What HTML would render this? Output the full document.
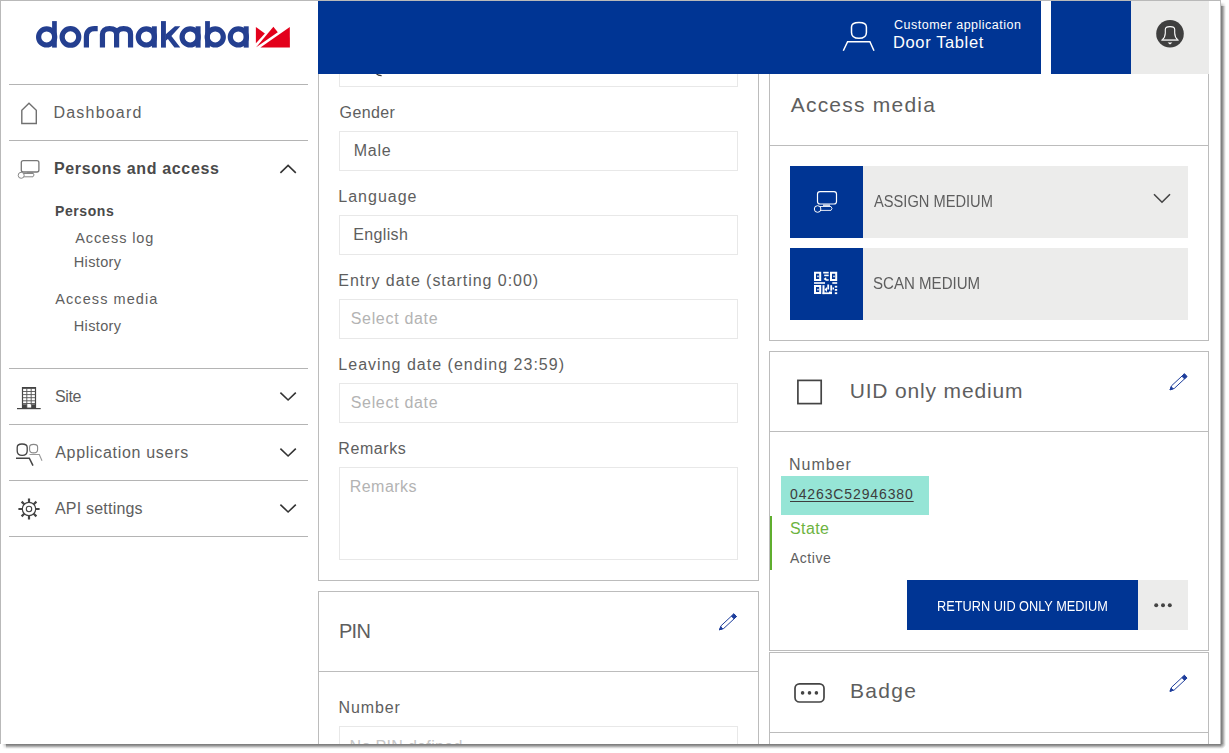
<!DOCTYPE html>
<html><head><meta charset="utf-8"><title>dormakaba</title>
<style>
html,body{margin:0;padding:0;background:#fff;}
body{width:1229px;height:753px;position:relative;overflow:hidden;font-family:"Liberation Sans", sans-serif;}
.a{position:absolute;box-sizing:border-box;}
.t{position:absolute;white-space:nowrap;font-family:"Liberation Sans", sans-serif;}
.ln{position:absolute;height:1px;background:#b4b4b4;}
.card{position:absolute;box-sizing:border-box;border:1px solid #bcbcbc;background:#fff;}
.inp{position:absolute;box-sizing:border-box;border:1px solid #e8e8e8;background:#fff;}
svg{position:absolute;overflow:visible;}
</style></head><body>
<!-- window shadow -->
<div class="a" style="left:1221px;top:6px;width:5px;height:738px;background:linear-gradient(90deg,rgba(0,0,0,.54),rgba(0,0,0,.4) 35%,rgba(0,0,0,.12) 75%,rgba(0,0,0,0));"></div>
<div class="a" style="left:6px;top:744px;width:1215px;height:5px;background:linear-gradient(180deg,rgba(0,0,0,.54),rgba(0,0,0,.4) 35%,rgba(0,0,0,.12) 75%,rgba(0,0,0,0));"></div>
<div class="a" style="left:1221px;top:744px;width:5px;height:5px;background:radial-gradient(circle at 0 0,rgba(0,0,0,.5),rgba(0,0,0,.3) 2px,rgba(0,0,0,0) 5px);"></div>
<div class="a" style="left:1221px;top:2px;width:5px;height:4px;background:linear-gradient(90deg,rgba(0,0,0,.3),rgba(0,0,0,.15) 40%,rgba(0,0,0,0));-webkit-mask-image:linear-gradient(180deg,transparent,#000);mask-image:linear-gradient(180deg,transparent,#000);"></div>
<div class="a" style="left:2px;top:744px;width:4px;height:5px;background:linear-gradient(180deg,rgba(0,0,0,.3),rgba(0,0,0,.15) 40%,rgba(0,0,0,0));-webkit-mask-image:linear-gradient(90deg,transparent,#000);mask-image:linear-gradient(90deg,transparent,#000);"></div>
<!-- window -->
<div class="a" id="win" style="left:0;top:0;width:1221px;height:744px;background:#fff;border-left:1px solid #b9b9b9;border-top:1px solid #b9b9b9;overflow:hidden;">
</div>
<div class="a" style="left:1px;top:1px;width:1220px;height:743px;overflow:hidden;">
 <div style="position:absolute;left:-1px;top:-1px;width:1229px;height:753px;">
  <!-- sidebar -->
  <svg style="left:0;top:0" width="1229" height="753" viewBox="0 0 1229 753">
   <!-- logo -->
   <g fill="none" stroke="#243f90" stroke-width="5.2">
    <circle cx="46.65" cy="36.95" r="8.05"/>
    <circle cx="70.45" cy="36.95" r="8.3"/>
    <path d="M86.4 47.6 V36.8 Q86.4 28.7 94.5 28.7 H97.7"/>
    <path d="M102.45 47.6 V34.5 Q102.45 28.7 109.5 28.7 Q116.6 28.7 116.6 34.5 V47.6 M116.6 34.5 Q116.6 28.7 123.6 28.7 Q130.55 28.7 130.55 34.5 V47.6"/>
    <circle cx="146.35" cy="36.95" r="8.05"/>
    <circle cx="190.15" cy="36.95" r="8.05"/>
    <circle cx="215.25" cy="36.95" r="8.05"/>
    <circle cx="238.35" cy="36.95" r="8.05"/>
    
   </g>
   <g fill="#243f90">
    <rect x="52.1" y="21.1" width="4.7" height="26.5"/>
    <rect x="151.9" y="26.3" width="4.9" height="21.3"/>
    <rect x="161" y="21.1" width="4.9" height="26.5"/>
    <polygon points="165.5,34.6 174.9,26.3 180.3,26.3 171.4,36 180.3,47.6 174.4,47.6 167.9,38.9 165.5,41"/>
    <rect x="195.6" y="26.3" width="5" height="21.3"/>
    <rect x="205.1" y="21.1" width="4.8" height="26.5"/>
    <rect x="243.7" y="26.3" width="5" height="21.3"/>
   </g>
   <polygon points="255.9,27 264.9,33.4 255.9,43.2" fill="#e3001b"/>
   <polygon points="273.4,26.8 277.8,32.3 256.2,47.3" fill="#e3001b"/>
   <polygon points="289.8,27 289.9,47.6 260.4,47.6" fill="#e3001b"/>
  </svg>
  <div class="ln" style="left:9px;top:84px;width:299px;"></div>
  <div class="ln" style="left:9px;top:140px;width:299px;"></div>
  <div class="ln" style="left:9px;top:368px;width:299px;"></div>
  <div class="ln" style="left:9px;top:424px;width:299px;"></div>
  <div class="ln" style="left:9px;top:480px;width:299px;"></div>
  <div class="ln" style="left:9px;top:536px;width:299px;"></div>
  <svg style="left:0;top:0" width="1229" height="753" viewBox="0 0 1229 753" fill="none">
   <!-- house -->
   <polygon points="21.8,123.5 21.8,110.3 29,103.3 36.3,110.3 36.3,123.5" stroke="#707070" stroke-width="1.4"/>
   <!-- monitor+key -->
   <rect x="21.3" y="160.6" width="17.6" height="11.4" rx="2" stroke="#777" stroke-width="1.3"/>
   <circle cx="21.2" cy="175.3" r="3" stroke="#888" stroke-width="1"/>
   <path d="M24 173.5 H33.5 L34 175 L33 176.8 H24" stroke="#888" stroke-width="1"/>
   <path d="M27 172.6 H33" stroke="#888" stroke-width="1.4"/>
   <!-- chevron up -->
   <polyline points="280.4,172.8 288.1,165.4 295.8,172.8" stroke="#333" stroke-width="1.6"/>
   <!-- chevrons down -->
   <polyline points="280.4,392.6 288.1,400 295.8,392.6" stroke="#333" stroke-width="1.6"/>
   <polyline points="280.4,448.6 288.1,456 295.8,448.6" stroke="#333" stroke-width="1.6"/>
   <polyline points="280.4,504.6 288.1,512 295.8,504.6" stroke="#333" stroke-width="1.6"/>
   <!-- building -->
   <rect x="22.5" y="387.6" width="13" height="20.6" stroke="#444" stroke-width="1.2"/>
   <rect x="22" y="387.2" width="14" height="1.6" fill="#444"/>
   <path d="M26.8 388 V408 M31.2 388 V405 M22.5 391.5 H35.5 M22.5 394.6 H35.5 M22.5 397.7 H35.5 M22.5 400.8 H35.5 M22.5 403.5 H35.5" stroke="#555" stroke-width="0.9"/>
   <rect x="22.5" y="404.3" width="4.3" height="4" fill="#444"/>
   <rect x="31.2" y="404.3" width="4.3" height="4" fill="#444"/>
   <path d="M17 408.6 H40.7" stroke="#444" stroke-width="1.2"/>
   <!-- users -->
   <path d="M17.2 447.5 Q17.2 444 22 444 Q27.2 444 27.2 447.5 V451 Q27.2 455.3 22.2 455.3 Q17.2 455.3 17.2 451 Z" stroke="#444" stroke-width="1.3"/>
   <path d="M16 458.2 H29.3 L33 465.6" stroke="#444" stroke-width="1.5"/>
   <path d="M29.6 447 Q29.6 444.4 33.6 444.4 Q37.6 444.4 37.6 447 V449.8 Q37.6 452.9 33.6 452.9 Q29.6 452.9 29.6 449.8 Z" stroke="#888" stroke-width="1.1"/>
   <path d="M29.5 454.5 H39.3 L42 460.8" stroke="#999" stroke-width="1.1"/>
   <!-- gear -->
   <circle cx="29" cy="509" r="6.7" stroke="#444" stroke-width="1.2"/>
   <circle cx="29" cy="509" r="2.7" stroke="#444" stroke-width="1.1"/>
   <g stroke="#444" stroke-width="2.2">
    <path d="M29 498.4 V502.6 M29 515.4 V519.6 M18.4 509 H22.6 M35.4 509 H39.6"/>
    <path d="M21.6 501.6 L24.5 504.5 M33.5 513.5 L36.4 516.4 M36.4 501.6 L33.5 504.5 M24.5 513.5 L21.6 516.4"/>
   </g>
  </svg>

  <!-- middle column -->
  <div class="card" style="left:318px;top:-5px;width:441px;height:586px;"></div>
  <div class="inp" style="left:339px;top:47px;width:399px;height:40px;"></div>
  <div class="inp" style="left:339px;top:131px;width:399px;height:40px;"></div>
  <div class="inp" style="left:339px;top:215px;width:399px;height:40px;"></div>
  <div class="inp" style="left:339px;top:299px;width:399px;height:40px;"></div>
  <div class="inp" style="left:339px;top:383px;width:399px;height:40px;"></div>
  <div class="inp" style="left:339px;top:467px;width:399px;height:93px;"></div>
  <div class="card" style="left:318px;top:591px;width:441px;height:200px;"></div>
  <div class="ln" style="left:319px;top:671px;width:439px;background:#bcbcbc;"></div>
  <div class="inp" style="left:339px;top:726px;width:399px;height:40px;"></div>

  <!-- right column -->
  <div class="card" style="left:769px;top:-5px;width:440px;height:346px;"></div>
  <div class="ln" style="left:770px;top:145px;width:438px;background:#bcbcbc;"></div>
  <div class="a" style="left:790px;top:166px;width:73px;height:72px;background:#003594;"></div>
  <div class="a" style="left:863px;top:166px;width:325px;height:72px;background:#ececeb;"></div>
  <div class="a" style="left:790px;top:248px;width:73px;height:72px;background:#003594;"></div>
  <div class="a" style="left:863px;top:248px;width:325px;height:72px;background:#ececeb;"></div>

  <div class="card" style="left:769px;top:351px;width:440px;height:300px;"></div>
  <div class="ln" style="left:770px;top:431px;width:438px;background:#bcbcbc;"></div>
  <div class="a" style="left:781px;top:476px;width:148px;height:39px;background:#96e5d6;"></div>
  <div class="a" style="left:770px;top:516px;width:2px;height:54px;background:#5fae2e;"></div>
  <div class="a" style="left:907px;top:580px;width:231px;height:50px;background:#003594;"></div>
  <div class="a" style="left:1138px;top:580px;width:50px;height:50px;background:#ececeb;"></div>

  <div class="card" style="left:769px;top:652px;width:440px;height:200px;"></div>
  <div class="ln" style="left:770px;top:732px;width:438px;background:#bcbcbc;"></div>

  <svg style="left:0;top:0" width="1229" height="753" viewBox="0 0 1229 753" fill="none"><path d="M376.3 73.6 Q378.2 75.7 381.6 75.6" stroke="#333" stroke-width="1.3"/></svg>
  <!-- header -->
  <div class="a" style="left:318px;top:0;width:723px;height:74px;background:#003594;"></div>
  <div class="a" style="left:1051px;top:0;width:80px;height:74px;background:#003594;"></div>
  <div class="a" style="left:1131px;top:0;width:78px;height:74px;background:#ebebea;"></div>

  <svg style="left:0;top:0" width="1229" height="753" viewBox="0 0 1229 753" fill="none">
   <!-- header user -->
   <path d="M851.5 27 Q851.5 22.6 859 22.6 Q866.4 22.6 866.4 27 V32.5 Q866.4 38.3 859 38.3 Q851.5 38.3 851.5 32.5 Z" stroke="#fff" stroke-width="1.5"/>
   <path d="M843.3 50.8 L847.6 41.7 H869.9 L874 50.8" stroke="#fff" stroke-width="1.5"/>
   <!-- bell -->
   <circle cx="1170" cy="33.8" r="13.8" fill="#3f3f3f"/>
   <path d="M1162.2 40 Q1165.3 37 1165.3 33 V29.5 Q1165.3 26.6 1170 26.6 Q1174.7 26.6 1174.7 29.5 V33 Q1174.7 37 1177.8 40 Z" stroke="#fff" stroke-width="1.1"/>
   <path d="M1161.8 40.2 H1178.2" stroke="#ccc" stroke-width="1.2"/>
   <path d="M1167.6 42.4 H1172.4 L1170 44.6 Z" fill="#fff"/>
   <!-- assign medium icon -->
   <rect x="817.5" y="191.6" width="19" height="12.4" rx="2.5" stroke="#fff" stroke-width="1.2"/>
   <circle cx="817.6" cy="209" r="3.3" stroke="#fff" stroke-width="1"/>
   <path d="M820 206.5 H831 L832 208.5 L831 210.4 H820" stroke="#fff" stroke-width="0.9"/>
   <path d="M823 205.2 H830" stroke="#fff" stroke-width="1.2"/>
   <!-- chevron down -->
   <polyline points="1154,194.3 1162,202.2 1170,194.3" stroke="#444" stroke-width="1.6"/>
   <!-- QR -->
   <g fill="#fff">
    <path d="M814 271.8 h7.2 v9.2 h-7.2z M816 273.8 v5.2 h3.2 v-5.2z" fill-rule="evenodd"/>
    <path d="M830 271.8 h7.2 v9.2 h-7.2z M832 273.8 v5.2 h3.2 v-5.2z" fill-rule="evenodd"/>
    <path d="M814 285 h7.2 v9.1 h-7.2z M816 287 v5.1 h3.2 v-5.1z" fill-rule="evenodd"/>
    <rect x="817.3" y="275.6" width="1.4" height="1.6"/>
    <rect x="833.3" y="275.6" width="1.4" height="1.6"/>
    <rect x="817.3" y="288.8" width="1.4" height="1.6"/>
    <rect x="823.2" y="271.8" width="5.5" height="1.7"/>
    <rect x="824.2" y="274.6" width="4.5" height="1.6"/>
    <path d="M826 277.3 L823.5 279 L826 280.8 H828.7 V279.3 H826.5 Z"/>
    <rect x="814" y="282.2" width="11" height="1.6"/>
    <rect x="832.3" y="282.2" width="4.9" height="1.6"/>
    <rect x="822.5" y="285.2" width="2" height="8.9"/>
    <rect x="822.5" y="292.4" width="6.5" height="1.7"/>
    <path d="M827 287 L824.5 289.6 L827 292 Z"/>
    <rect x="827.3" y="284.5" width="1.8" height="5"/>
    <rect x="830.3" y="285.2" width="1.8" height="5.5"/>
    <rect x="829" y="291.5" width="3" height="2.6"/>
    <rect x="834.8" y="285.8" width="2.4" height="1.8"/>
    <rect x="834.8" y="289" width="2.4" height="1.8"/>
    <rect x="834.8" y="292.3" width="2.4" height="1.8"/>
    <rect x="832.5" y="287.5" width="1.5" height="2"/>
   </g>
   <!-- checkbox -->
   <rect x="797.9" y="380.4" width="23.3" height="23.2" stroke="#444" stroke-width="1.7"/>
   <!-- badge icon -->
   <rect x="795" y="683.8" width="29" height="18.2" rx="4.5" stroke="#444" stroke-width="1.7"/>
   <circle cx="802.6" cy="692.9" r="1.8" fill="#444"/>
   <circle cx="809.5" cy="692.9" r="1.8" fill="#444"/>
   <circle cx="816.4" cy="692.9" r="1.8" fill="#444"/>
   <!-- dots -->
   <circle cx="1156.2" cy="605.2" r="2" fill="#444"/>
   <circle cx="1163" cy="605.2" r="2" fill="#444"/>
   <circle cx="1169.8" cy="605.2" r="2" fill="#444"/>
  </svg>
  <!-- pencils -->
  <svg style="left:0;top:0" width="1229" height="753" viewBox="0 0 1229 753" fill="none">
   <g id="pen">
    <path d="M719.5 629.8 L721.14 625.69 L733.91 613.81 L736.49 616.59 L723.72 628.47 Z" stroke="#1e3e9c" stroke-width="1" stroke-linejoin="round"/>
    <path d="M719.5 629.8 L720.75 626.74 L722.65 628.78 Z" fill="#1e3e9c" stroke="#1e3e9c" stroke-width="1"/>
    <path d="M731.39 616.15 L733.91 613.81 L736.49 616.59 L733.97 618.93 Z" fill="#1e3e9c" stroke="#1e3e9c" stroke-width="0.7"/>
   </g>
   <use href="#pen" x="450.5" y="-240"/>
   <use href="#pen" x="450.5" y="61.5"/>
  </svg>
  <div class="t" style="left:53.50px;top:105.01px;font-size:16px;line-height:16px;font-weight:400;color:#5e5e5e;letter-spacing:1.203px;">Dashboard</div>
<div class="t" style="left:54.00px;top:161.01px;font-size:16px;line-height:16px;font-weight:700;color:#4a4a4a;letter-spacing:0.649px;">Persons and access</div>
<div class="t" style="left:55.00px;top:204.00px;font-size:14px;line-height:14px;font-weight:700;color:#4a4a4a;letter-spacing:0.590px;">Persons</div>
<div class="t" style="left:75.30px;top:231.01px;font-size:14.5px;line-height:14.5px;font-weight:400;color:#5e5e5e;letter-spacing:0.883px;">Access log</div>
<div class="t" style="left:73.80px;top:255.00px;font-size:14.5px;line-height:14.5px;font-weight:400;color:#5e5e5e;letter-spacing:0.356px;">History</div>
<div class="t" style="left:55.30px;top:292.01px;font-size:14.5px;line-height:14.5px;font-weight:400;color:#5e5e5e;letter-spacing:1.073px;">Access media</div>
<div class="t" style="left:73.80px;top:319.01px;font-size:14.5px;line-height:14.5px;font-weight:400;color:#5e5e5e;letter-spacing:0.356px;">History</div>
<div class="t" style="left:55.00px;top:389.01px;font-size:16px;line-height:16px;font-weight:400;color:#5e5e5e;letter-spacing:-0.357px;">Site</div>
<div class="t" style="left:55.20px;top:445.01px;font-size:16px;line-height:16px;font-weight:400;color:#5e5e5e;letter-spacing:0.697px;">Application users</div>
<div class="t" style="left:55.00px;top:501.01px;font-size:16px;line-height:16px;font-weight:400;color:#5e5e5e;letter-spacing:0.202px;">API settings</div>
<div class="t" style="left:894.00px;top:19.01px;font-size:12.5px;line-height:12.5px;font-weight:400;color:#fff;letter-spacing:0.502px;">Customer application</div>
<div class="t" style="left:893.00px;top:34.00px;font-size:16.5px;line-height:16.5px;font-weight:400;color:#fff;letter-spacing:0.621px;">Door Tablet</div>
<div class="t" style="left:339.60px;top:105.00px;font-size:16px;line-height:16px;font-weight:400;color:#5e5e5e;letter-spacing:0.352px;">Gender</div>
<div class="t" style="left:353.70px;top:143.01px;font-size:16px;line-height:16px;font-weight:400;color:#5e5e5e;letter-spacing:0.773px;">Male</div>
<div class="t" style="left:338.30px;top:189.00px;font-size:16px;line-height:16px;font-weight:400;color:#5e5e5e;letter-spacing:1.002px;">Language</div>
<div class="t" style="left:353.20px;top:227.01px;font-size:16px;line-height:16px;font-weight:400;color:#5e5e5e;letter-spacing:0.354px;">English</div>
<div class="t" style="left:338.30px;top:273.00px;font-size:16px;line-height:16px;font-weight:400;color:#5e5e5e;letter-spacing:0.950px;">Entry date (starting 0:00)</div>
<div class="t" style="left:350.70px;top:311.01px;font-size:16px;line-height:16px;font-weight:400;color:#b3b3b3;letter-spacing:0.684px;">Select date</div>
<div class="t" style="left:338.30px;top:357.00px;font-size:16px;line-height:16px;font-weight:400;color:#5e5e5e;letter-spacing:1.018px;">Leaving date (ending 23:59)</div>
<div class="t" style="left:350.70px;top:395.01px;font-size:16px;line-height:16px;font-weight:400;color:#b3b3b3;letter-spacing:0.684px;">Select date</div>
<div class="t" style="left:338.30px;top:441.01px;font-size:16px;line-height:16px;font-weight:400;color:#5e5e5e;letter-spacing:0.582px;">Remarks</div>
<div class="t" style="left:349.70px;top:479.01px;font-size:16px;line-height:16px;font-weight:400;color:#b3b3b3;letter-spacing:0.482px;">Remarks</div>
<div class="t" style="left:338.90px;top:621.01px;font-size:20px;line-height:20px;font-weight:400;color:#5e5e5e;letter-spacing:-0.698px;">PIN</div>
<div class="t" style="left:338.50px;top:700.01px;font-size:16px;line-height:16px;font-weight:400;color:#5e5e5e;letter-spacing:0.884px;">Number</div>
<div class="t" style="left:349.50px;top:739.01px;font-size:16px;line-height:16px;font-weight:400;color:#c6c6c6;letter-spacing:0.338px;">No PIN defined</div>
<div class="t" style="left:790.70px;top:94.01px;font-size:21px;line-height:21px;font-weight:400;color:#5e5e5e;letter-spacing:1.224px;">Access media</div>
<div class="t" style="left:873.70px;top:194.01px;font-size:16px;line-height:16px;font-weight:400;color:#5e5e5e;letter-spacing:0.000px;transform:scaleX(0.9161);transform-origin:0.00px 0;">ASSIGN MEDIUM</div>
<div class="t" style="left:873.20px;top:276.01px;font-size:16px;line-height:16px;font-weight:400;color:#5e5e5e;letter-spacing:0.000px;transform:scaleX(0.9414);transform-origin:0.00px 0;">SCAN MEDIUM</div>
<div class="t" style="left:849.70px;top:380.00px;font-size:21px;line-height:21px;font-weight:400;color:#5e5e5e;letter-spacing:0.839px;">UID only medium</div>
<div class="t" style="left:789.10px;top:457.00px;font-size:16px;line-height:16px;font-weight:400;color:#5e5e5e;letter-spacing:0.964px;">Number</div>
<div class="t" style="left:790.00px;top:487.00px;font-size:14px;line-height:14px;font-weight:400;color:#3d3d3d;letter-spacing:0.881px;text-decoration:underline;text-underline-offset:2px;">04263C52946380</div>
<div class="t" style="left:790.00px;top:521.01px;font-size:16px;line-height:16px;font-weight:400;color:#6db33f;letter-spacing:0.385px;">State</div>
<div class="t" style="left:790.00px;top:551.00px;font-size:14px;line-height:14px;font-weight:400;color:#5e5e5e;letter-spacing:0.512px;">Active</div>
<div class="t" style="left:937.00px;top:599.01px;font-size:14.5px;line-height:14.5px;font-weight:400;color:#fff;letter-spacing:0.000px;transform:scaleX(0.8775);transform-origin:1.00px 0;">RETURN UID ONLY MEDIUM</div>
<div class="t" style="left:850.00px;top:680.00px;font-size:21px;line-height:21px;font-weight:400;color:#5e5e5e;letter-spacing:1.314px;">Badge</div>
 </div>
</div>
<div class="a" style="left:1220px;top:0;width:1px;height:744px;background:#bdbdbd;"></div>
</body></html>
